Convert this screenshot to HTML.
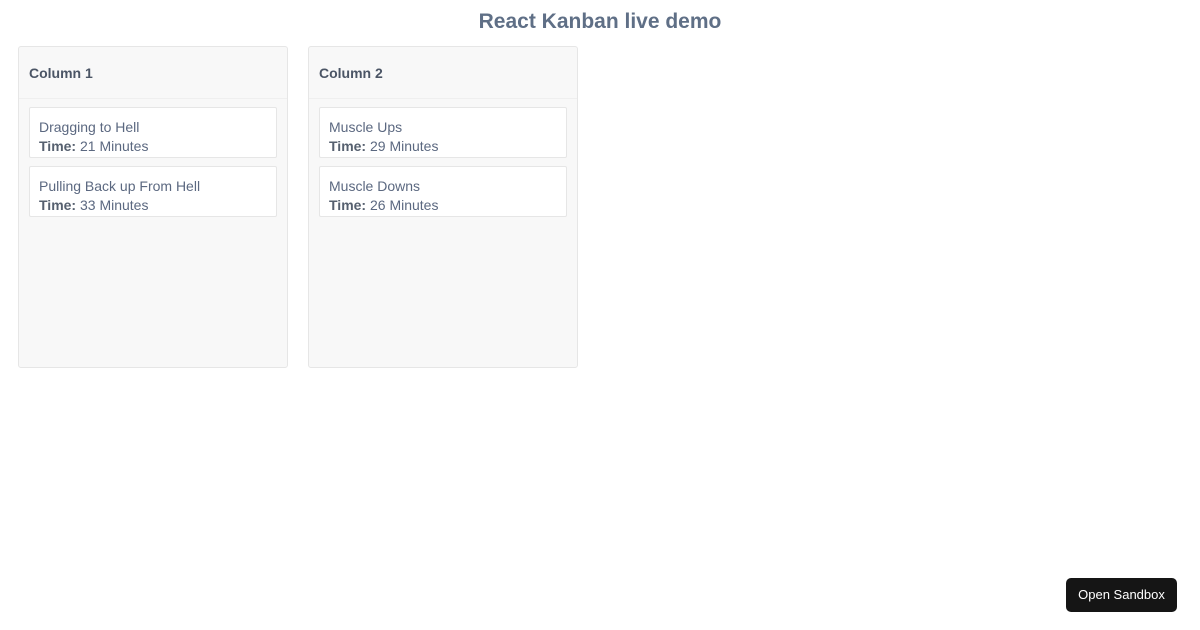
<!DOCTYPE html>
<html><head><style>
body{margin:0;width:1200px;height:630px;background:#fff;font-family:"Liberation Sans",sans-serif;position:relative;overflow:hidden;color:#5b6880}
h1{position:absolute;top:8px;left:0;width:1200px;text-align:center;margin:0;font-size:21px;font-weight:bold;color:#5f6f86;line-height:28px}
.col{position:absolute;top:46px;width:268px;height:320px;background:#f8f8f8;border:1px solid #e6e6e6;border-radius:3px}
.hd{height:51px;border-bottom:1px solid #efefef;font-weight:bold;font-size:14px;color:#4b5565;padding-left:10px;line-height:52px}
.card{position:absolute;left:10px;width:248px;height:51px;background:#fff;border:1px solid #e6e6e6;border-radius:2px;font-size:14px;line-height:19px;padding:0 0 0 9px;box-sizing:border-box}
.card div:first-child{margin-top:10px}
b{color:#56606f}
.btn{position:absolute;left:1066px;top:578px;width:111px;height:34px;background:#151515;color:#fff;border-radius:5px;font-size:13px;text-align:center;line-height:34px}
</style></head><body>
<h1>React Kanban live demo</h1>
<div class="col" style="left:18px"><div class="hd">Column 1</div>
<div class="card" style="top:60px"><div>Dragging to Hell</div><div><b>Time:</b> 21 Minutes</div></div>
<div class="card" style="top:119px"><div>Pulling Back up From Hell</div><div><b>Time:</b> 33 Minutes</div></div>
</div>
<div class="col" style="left:308px"><div class="hd">Column 2</div>
<div class="card" style="top:60px"><div>Muscle Ups</div><div><b>Time:</b> 29 Minutes</div></div>
<div class="card" style="top:119px"><div>Muscle Downs</div><div><b>Time:</b> 26 Minutes</div></div>
</div>
<div class="btn">Open Sandbox</div>
</body></html>
